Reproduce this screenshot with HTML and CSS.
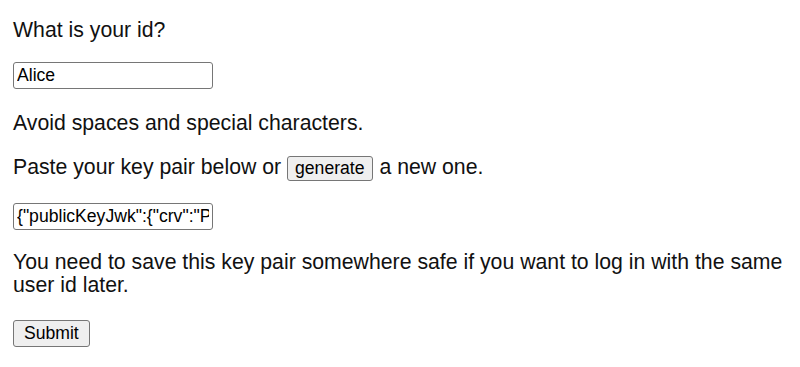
FILE: index.html
```html
<html>
    <head>
        <meta charset="utf-8">
        <link rel="stylesheet" href="styles.css">
    </head>
    <body>
        <form class="login">
            <p class="label">What is your id?</p>
            <div class="row"><input type="text" class="field" value="Alice"></div>
            <p class="hint">Avoid spaces and special characters.</p>
            <p class="label inline">Paste your key pair below or <button type="button" class="btn small">generate</button> a new one.</p>
            <div class="row key"><input type="text" class="field" value='{"publicKeyJwk":{"crv":"P-256","ext":true,"key_ops":["verify"],"kty":"EC"}}'></div>
            <p class="warn">You need to save this key pair somewhere safe if you want to log in with the same user id later.</p>
            <div class="row submit"><button type="submit" class="btn">Submit</button></div>
        </form>
    </body>
</html>
```

FILE: styles.css
```css
* { box-sizing: border-box; }

html, body {
    margin: 0;
    padding: 0;
    background: #fff;
}

.login {
    padding: 19px 13px 0 13px;
    font-family: "Liberation Sans", Arial, sans-serif;
    font-size: 21.25px;
    line-height: 23px;
    color: #111;
}

.login p { margin: 0; }

.label, .hint { height: 23px; }

.row { display: flex; }

.login .row { margin-top: 20px; }
.login .hint { margin-top: 23px; }
.login .inline { margin-top: 21px; }
.login .key { margin-top: 24px; }
.login .warn { margin-top: 21px; }
.login .submit { margin-top: 23px; }

.field {
    width: 200px;
    height: 27px;
    padding: 1px 3px;
    border: 1px solid #767676;
    border-radius: 3px;
    font-family: "Liberation Sans", Arial, sans-serif;
    font-size: 17.6px;
    color: #000;
    background: #fff;
}

.btn {
    height: 27px;
    padding: 0 10px;
    border: 1px solid #767676;
    border-radius: 3px;
    background: #efefef;
    font-family: "Liberation Sans", Arial, sans-serif;
    font-size: 17.6px;
    color: #000;
}

.btn.small {
    height: 25px;
    padding: 0 7px;
    margin: 0 1px 0 0;
}
```
